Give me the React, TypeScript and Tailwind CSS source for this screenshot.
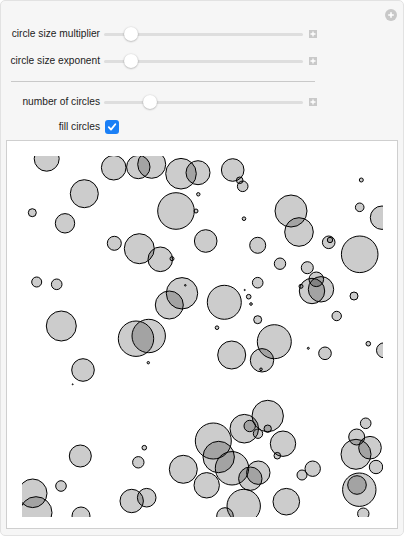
import React from "react";

// [cx, cy, r] in page pixels, plot clipped to 21..382 x 155..516
const CIRCLES: [number, number, number][] = [
  [45.7, 157.7, 12.5], [112.7, 166.7, 12.3], [137.3, 166, 11.7], [150.7, 163.3, 14],
  [180, 172.7, 15.3], [197, 171.7, 12], [231.7, 169, 11.3], [238.7, 179.3, 3.3],
  [241.7, 185.3, 5.3], [83.3, 192.7, 14], [197.3, 193.3, 1.7], [175, 210, 18.3],
  [195, 210, 2], [31.3, 211.7, 4], [64, 222.3, 9.7], [243, 217.7, 1.8],
  [290, 210, 16], [298, 231, 14.3], [360.3, 179, 2], [358.7, 206.3, 4.3],
  [381, 216.7, 11.7], [113.3, 242.3, 7], [138.3, 247.7, 15], [159.3, 258.3, 12.3],
  [171, 257.7, 2], [204.7, 240, 11.3], [256.7, 244.3, 8], [327.7, 241.3, 6.3],
  [329, 239, 2.7], [358.7, 253.3, 18.3], [279, 262.7, 5.7], [306.3, 266.7, 6],
  [35.7, 281, 5], [55.7, 283.3, 5.3], [181, 292.3, 15.7], [168.3, 304, 14],
  [184.3, 284.3, 0.8], [223.3, 301.3, 17], [256.7, 281.7, 5.3], [243.7, 289, 0.6],
  [247.7, 295.7, 2.3], [250, 303, 1.3], [256.7, 318.7, 4], [216, 326.7, 1.8],
  [315.3, 278.3, 7.3], [311, 290, 12.7], [320, 288.3, 12.7], [300, 285.3, 2],
  [353, 295, 4], [335.7, 315, 4.7], [60.3, 325, 15], [135, 337.7, 17.7],
  [147.7, 335, 16.7], [147.3, 361.7, 1.2], [82, 369, 11.3], [71.7, 383.3, 0.5],
  [273.3, 340.7, 17], [230.7, 354, 14], [261, 359.3, 11.7], [260, 368.3, 1.3],
  [307.3, 347.3, 1], [324, 352.3, 6.3], [367.3, 342.7, 2.3], [383, 349.3, 7.5],
  [79.3, 455, 11], [60, 485, 5.3], [143.3, 446.7, 2.3], [137.3, 461.3, 5.7],
  [31.7, 492.3, 14.3], [35, 511.7, 16], [80, 515, 9], [130.7, 500, 11.7],
  [145.7, 496.7, 9.3], [182.3, 468.3, 14], [212.3, 440, 18], [217.7, 456, 15.7],
  [231, 467.3, 16.7], [205.7, 484.3, 12.7], [243.3, 427.7, 14.3], [266.7, 415, 15.7],
  [248.7, 425, 5.7], [257, 432.7, 4.7], [266.7, 427.7, 3.7], [282, 442.7, 12.7],
  [276.3, 454.7, 3.3], [257.3, 471.7, 11.7], [249.3, 477.7, 11.7], [242.7, 505, 16.7],
  [224, 515, 8.3], [285.3, 500.7, 13.3], [311.7, 467.7, 7.7], [301, 474, 5],
  [364.7, 422.3, 5.3], [355.7, 436, 8], [355, 453.3, 15], [369, 446.7, 11.3],
  [375, 466, 6.7], [358.3, 488.7, 16.7], [356, 484, 9.3], [362.3, 512.7, 5.7],
];

function PlusBox() {
  return (
    <div className="w-2 h-2 bg-[#c9c9c9] flex items-center justify-center ml-[6px] shrink-0">
      <svg width="6" height="6" viewBox="0 0 6 6">
        <path d="M3 0.5v5M0.5 3h5" stroke="#fff" strokeWidth="1.3" />
      </svg>
    </div>
  );
}

function SliderRow({ label, thumb }: { label: string; thumb: number }) {
  return (
    <div className="flex items-center h-5">
      <span className="w-[100px] pr-[1px] text-right shrink-0">{label}</span>
      <div className="relative ml-[3px] w-[199px] h-[3px] rounded-full bg-[#dedede]">
        <div
          className="absolute top-1/2 w-[14px] h-[14px] -translate-x-1/2 -translate-y-1/2 rounded-full bg-white shadow-[0_0.5px_2px_rgba(0,0,0,0.35)]"
          style={{ left: thumb }}
        />
      </div>
      <PlusBox />
    </div>
  );
}

export default function App() {
  return (
    <div className="relative w-[404px] h-[536px] bg-[#f6f6f6] border border-[#e2e2e2] rounded-[5px] font-['Liberation_Sans',Arial,sans-serif] text-[10.2px] text-[#222] flex flex-col">
      {/* corner add button */}
      <div className="absolute right-[6px] top-[8px] w-3 h-3 rounded-full bg-[#c8c8c8] flex items-center justify-center">
        <svg width="8" height="8" viewBox="0 0 8 8">
          <path d="M4 1.2v5.6M1.2 4h5.6" stroke="#fff" strokeWidth="1.6" />
        </svg>
      </div>

      <div className="pt-[23px] flex flex-col">
        <SliderRow label="circle size multiplier" thumb={27} />
        <div className="mt-[7px]">
          <SliderRow label="circle size exponent" thumb={27} />
        </div>
        <div className="mt-[10px] ml-[10px] w-[304px] h-px bg-[#c9c9c9]" />
        <div className="mt-[10px]">
          <SliderRow label="number of circles" thumb={46} />
        </div>
        <div className="flex items-center h-5 mt-[5px]">
          <span className="w-[100px] pr-[1px] text-right shrink-0">fill circles</span>
          <div className="ml-[4px] w-[14px] h-[14px] rounded-[3px] bg-[#1a7ff6] flex items-center justify-center">
            <svg width="10" height="10" viewBox="0 0 10 10">
              <path d="M1.8 5.2 4 7.6 8.3 2.2" fill="none" stroke="#fff" strokeWidth="1.8" strokeLinecap="round" strokeLinejoin="round" />
            </svg>
          </div>
        </div>
      </div>

      <div className="mt-[3px] mx-[5px] h-[389px] bg-white border border-[#cfcfcf] flex justify-center pt-[15px]">
        <svg width="361" height="361" viewBox="21 155 361 361" className="block">
          {CIRCLES.map(([cx, cy, r], i) => (
            <circle key={i} cx={cx} cy={cy} r={r} fill="rgba(0,0,0,0.2)" stroke="#000" strokeWidth="1" />
          ))}
        </svg>
      </div>
    </div>
  );
}
